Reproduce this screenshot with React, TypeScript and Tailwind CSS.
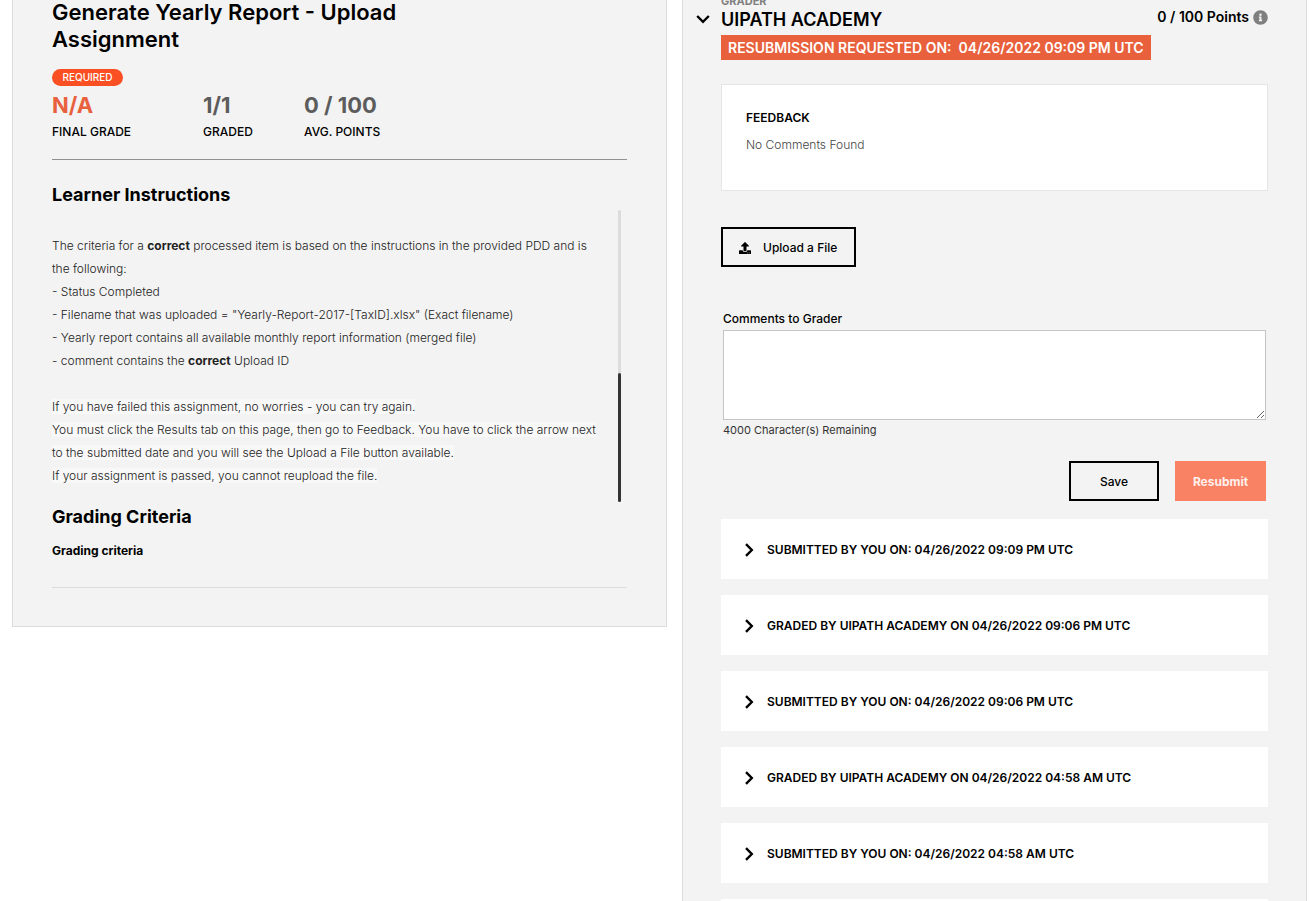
import { useState } from "react";
import { FaInfoCircle, FaUpload } from "react-icons/fa";

const MAX_CHARS = 4000;

const stats = [
  { value: "N/A", label: "FINAL GRADE", color: "text-[#e8603c]", width: "w-[151px]" },
  { value: "1/1", label: "GRADED", color: "text-[#5c5c5c]", width: "w-[101px]" },
  { value: "0 / 100", label: "AVG. POINTS", color: "text-[#5c5c5c]", width: "w-auto" },
];

const history = [
  "SUBMITTED BY YOU ON: 04/26/2022 09:09 PM UTC",
  "GRADED BY UIPATH ACADEMY ON 04/26/2022 09:06 PM UTC",
  "SUBMITTED BY YOU ON: 04/26/2022 09:06 PM UTC",
  "GRADED BY UIPATH ACADEMY ON 04/26/2022 04:58 AM UTC",
  "SUBMITTED BY YOU ON: 04/26/2022 04:58 AM UTC",
  "GRADED BY UIPATH ACADEMY ON 04/26/2022 04:41 AM UTC",
];

const Chevron = ({ className = "" }: { className?: string }) => (
  <svg viewBox="0 0 14 14" className={`size-[14px] shrink-0 ${className}`} fill="none" aria-hidden="true">
    <path d="M4 1.2 L9.8 7 L4 12.8" stroke="black" strokeWidth="2.4" />
  </svg>
);

const AssignmentCard = () => (
  <section className="self-start border border-[#dcdcdc] bg-[#f3f3f3] px-[39px] py-[38px]">
    <h1 className="max-w-[400px] text-[22px] leading-[27px] font-semibold">
      Generate Yearly Report - Upload Assignment
    </h1>
    <span className="mt-4 flex h-[17px] w-[71px] items-center justify-center rounded-full bg-[#fa4f22] text-[10px] font-medium text-white">
      REQUIRED
    </span>

    <dl className="mt-[5px] flex">
      {stats.map((stat) => (
        <div key={stat.label} className={`flex flex-col-reverse ${stat.width}`}>
          <dt className="text-xs leading-[26px] font-medium">{stat.label}</dt>
          <dd className={`text-[22px] leading-[28px] font-bold ${stat.color}`}>{stat.value}</dd>
        </div>
      ))}
    </dl>
    <hr className="mt-[14px] border-[#919191]" />

    <h2 className="mt-[22px] text-lg leading-[26px] font-bold">Learner Instructions</h2>
    <div className="mt-[2px] flex justify-between pr-[6px]">
      <div className="pt-6 pr-[14px] pb-[15px] text-xs leading-[23px] font-light text-[#222222]">
        <p>
          The criteria for a <b className="font-bold">correct</b> processed item is based on the
          instructions in the provided PDD and is the following:
        </p>
        <p>- Status Completed</p>
        <p>- Filename that was uploaded = "Yearly-Report-2017-[TaxID].xlsx" (Exact filename)</p>
        <p>- Yearly report contains all available monthly report information (merged file)</p>
        <p>
          - comment contains the <b className="font-bold">correct</b> Upload ID
        </p>
        <p className="mt-[23px]">
          <span className="bg-[#f8f8f8]">If you have failed this assignment, no worries - you can try again.</span>
        </p>
        <p>
          <span className="bg-[#f8f8f8]">
            You must click the Results tab on this page, then go to Feedback. You have to click the
            arrow next to the submitted date and you will see the Upload a File button available.
          </span>
        </p>
        <p>
          <span className="bg-[#f8f8f8]">If your assignment is passed, you cannot reupload the file.</span>
        </p>
      </div>
      <div className="flex w-[3px] shrink-0 flex-col justify-end rounded-full bg-[#dcdcdc]">
        <div className="h-[129px] rounded-full bg-[#333333]" />
      </div>
    </div>

    <h2 className="mt-[2px] text-lg leading-[26px] font-bold">Grading Criteria</h2>
    <h3 className="mt-3 text-xs leading-[18px] font-bold">Grading criteria</h3>
    <hr className="mt-[27px] border-[#dcdcdc]" />
  </section>
);

const GraderCard = () => {
  const [comment, setComment] = useState("");

  return (
    <section className="border border-[#dcdcdc] bg-[#f3f3f3] pt-8 pr-[38px] pb-10 pl-[13px]">
      <div className="flex items-start">
        <button type="button" aria-label="Collapse grader" className="mt-[15px] flex h-[22px] w-[25px] items-center">
          <Chevron className="rotate-90" />
        </button>
        <div className="flex-1">
          <p className="text-[11px] leading-4 font-bold text-[#7f7f7f]">GRADER</p>
          <h2 className="text-lg leading-[22px] font-semibold">UIPATH ACADEMY</h2>
        </div>
        <p className="mt-[14px] flex h-5 items-center gap-1 text-sm font-semibold">
          0 / 100 Points
          <FaInfoCircle className="size-[15px] text-[#7f7f7f]" />
        </p>
      </div>

      <div className="pl-[25px]">
        <p className="mt-1 w-fit bg-[#e8603c] px-[7px] text-sm leading-[25px] font-semibold whitespace-pre text-white">
          {"RESUBMISSION REQUESTED ON:  04/26/2022 09:09 PM UTC"}
        </p>

        <div className="mt-6 border border-[#e5e5e5] bg-white px-6 pt-6 pb-[34px]">
          <h3 className="text-xs leading-[18px] font-semibold">FEEDBACK</h3>
          <p className="mt-[7px] text-xs leading-[22px] font-light text-[#444444]">No Comments Found</p>
        </div>

        <button
          type="button"
          className="mt-9 flex h-10 w-[135px] items-center gap-3 border-2 border-black px-4 pt-[2px] text-xs font-medium"
        >
          <FaUpload className="size-3" />
          Upload a File
        </button>

        <div className="mt-[42px] px-[2px]">
          <label htmlFor="comments" className="block text-xs leading-5 font-medium">
            Comments to Grader
          </label>
          <textarea
            id="comments"
            maxLength={MAX_CHARS}
            value={comment}
            onChange={(e) => setComment(e.target.value)}
            className="mt-px block h-[90px] w-full border border-[#c4c4c4] bg-white p-2 text-xs"
          />
          <p className="text-[11px] leading-5 text-[#333333]">
            {MAX_CHARS - comment.length} Character(s) Remaining
          </p>
          <div className="mt-[21px] flex justify-end gap-4">
            <button type="button" className="h-10 w-[90px] border-2 border-black pt-[2px] text-xs font-medium">
              Save
            </button>
            <button type="button" className="h-10 w-[91px] bg-[#fa8264] pt-[2px] text-xs font-bold text-[#fff0ec]">
              Resubmit
            </button>
          </div>
        </div>

        <ul className="mt-[18px] flex flex-col gap-4">
          {history.map((entry) => (
            <li key={entry}>
              <button
                type="button"
                className="flex h-[60px] w-full items-center gap-[11px] bg-white px-[21px] pt-[2px] text-left text-xs font-semibold"
              >
                <Chevron />
                {entry}
              </button>
            </li>
          ))}
        </ul>
      </div>
    </section>
  );
};

const App = () => (
  <div className="h-screen overflow-hidden bg-white font-['Inter',sans-serif] text-black">
    <main className="-mt-10 grid grid-cols-[655fr_625fr] gap-[15px] pr-[5px] pl-3">
      <AssignmentCard />
      <GraderCard />
    </main>
  </div>
);

export default App;
